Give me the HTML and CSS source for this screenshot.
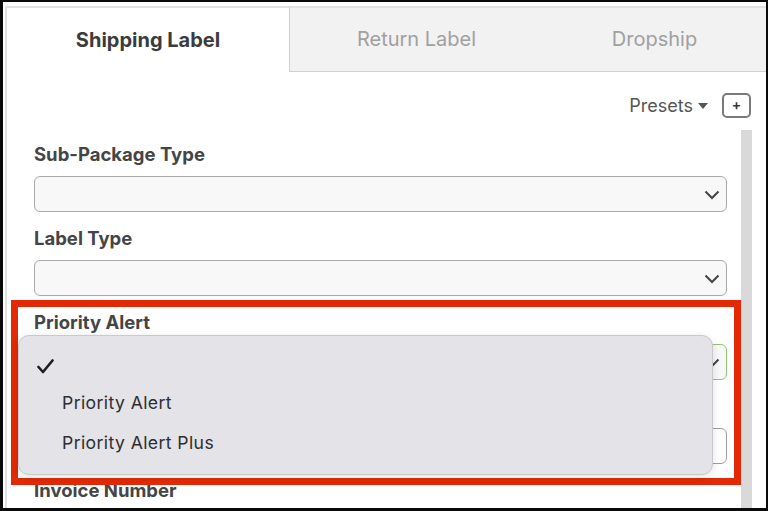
FILE: index.html
```html
<!DOCTYPE html>
<html lang="en">
<head>
<meta charset="utf-8">
<title>Shipping Label</title>
<link rel="stylesheet" href="styles.css">
</head>
<body>
<div class="frame">
  <div class="panel">
    <div class="tabs">
      <div class="tab active">Shipping Label</div>
      <div class="tab">Return Label</div>
      <div class="tab">Dropship</div>
    </div>
    <div class="body">
      <div class="presets-row">
        <span class="presets">Presets<span class="caret"></span></span>
        <span class="add">+</span>
      </div>
      <div class="scroll">
        <div class="fields">
          <div class="field">
            <div class="label">Sub-Package Type</div>
            <div class="select"><svg class="chev" width="16" height="10" viewBox="0 0 16 10"><path d="M1.5 1.5 L8 8 L14.5 1.5" fill="none" stroke="#444" stroke-width="2"/></svg></div>
          </div>
          <div class="field">
            <div class="label">Label Type</div>
            <div class="select"><svg class="chev" width="16" height="10" viewBox="0 0 16 10"><path d="M1.5 1.5 L8 8 L14.5 1.5" fill="none" stroke="#444" stroke-width="2"/></svg></div>
          </div>
          <div class="field">
            <div class="label">Priority Alert</div>
            <div class="select focused"><svg class="chev" width="16" height="10" viewBox="0 0 16 10"><path d="M1.5 1.5 L8 8 L14.5 1.5" fill="none" stroke="#444" stroke-width="2"/></svg></div>
          </div>
          <div class="field">
            <div class="label"></div>
            <div class="input"></div>
          </div>
          <div class="field">
            <div class="label">Invoice Number</div>
            <div class="input"></div>
          </div>
        </div>
        <div class="scrollbar"></div>
      </div>
    </div>
  </div>
  <div class="highlight"></div>
  <div class="popup">
    <div class="item checked"><svg class="check" width="17" height="15" viewBox="0 0 17 15"><path d="M1.5 8 L6 13 L15.5 1.5" fill="none" stroke="#1e1e1e" stroke-width="2.6" stroke-linecap="round" stroke-linejoin="round"/></svg></div>
    <div class="item">Priority Alert</div>
    <div class="item">Priority Alert Plus</div>
  </div>
</div>
</body>
</html>
```
FILE: styles.css
```css
* { box-sizing: border-box; }
html, body { margin: 0; padding: 0; }
body { background: #000; font-family: Inter, "Liberation Sans", Arial, sans-serif; }

.frame {
  position: relative;
  width: 768px;
  height: 511px;
  background: #fff;
  border-style: solid;
  border-color: #0a0a0a;
  border-width: 2px 2px 3px 3px;
  padding: 4px 0 0 2px;
  overflow: hidden;
}

.panel {
  height: 100%;
  border-left: 2px solid #e2e2e2;
  display: flex;
  flex-direction: column;
}

.tabs {
  display: grid;
  grid-template-columns: 283px 253px 1fr;
  height: 66px;
  flex: none;
}
.tab {
  display: flex;
  align-items: center;
  justify-content: center;
  font-size: 20px;
  color: #a0a0a0;
  background: #f2f2f2;
  border-top: 2px solid #e2e2e2;
  border-bottom: 1px solid #cfcfcf;
  padding-bottom: 1px;
}
.tab.active {
  background: #fff;
  color: #3c3c3c;
  font-weight: 700;
  border-bottom: none;
  border-right: 1px solid #cfcfcf;
  padding-bottom: 0;
}

.body {
  flex: 1;
  display: flex;
  flex-direction: column;
  min-height: 0;
}

.presets-row {
  display: flex;
  justify-content: flex-end;
  align-items: center;
  gap: 14px;
  padding: 20px 15px 0 0;
  height: 46px;
  flex: none;
}
.presets {
  font-size: 18px;
  color: #555;
  display: flex;
  align-items: center;
}
.caret {
  display: inline-block;
  margin-left: 5px;
  width: 0;
  height: 0;
  border-left: 5.5px solid transparent;
  border-right: 5.5px solid transparent;
  border-top: 6px solid #555;
  margin-top: 2px;
}
.add {
  width: 29px;
  height: 25px;
  border: 2px solid #7a7a7a;
  border-radius: 5px;
  display: flex;
  align-items: center;
  justify-content: center;
  font-size: 14px;
  font-weight: 600;
  color: #333;
  line-height: 1;
}

.scroll {
  flex: 1;
  display: flex;
  margin-top: 12px;
  min-height: 0;
}
.fields {
  flex: 1;
  padding: 14px 14px 0 27px;
  display: flex;
  flex-direction: column;
  gap: 16px;
}
.field {
  display: flex;
  flex-direction: column;
  gap: 12px;
}
.label {
  font-size: 18.5px;
  font-weight: 700;
  color: #454545;
  line-height: 20px;
  height: 20px;
}
.select, .input {
  height: 36px;
  border: 1px solid #a9a9a9;
  border-radius: 6px;
  background: #f8f8f8;
  display: flex;
  align-items: center;
  justify-content: flex-end;
  padding-right: 6px;
}
.input { background: #fff; border-color: #9d9d9d; }
.select.focused { border-color: #8cc66e; }
.chev { margin-top: 1px; }

.scrollbar {
  width: 11px;
  background: #d9d9d9;
  margin-right: 14px;
}

.highlight {
  position: absolute;
  left: 8px;
  top: 298px;
  width: 730px;
  height: 185px;
  border: 7px solid #e22a06;
}

.popup {
  position: absolute;
  left: 15px;
  top: 333px;
  width: 695px;
  height: 140px;
  background: #e3e3e8;
  border: 1px solid #c9c9cd;
  border-radius: 11px;
  box-shadow: 0 2px 8px rgba(0,0,0,0.12);
  padding-top: 7px;
}
.item {
  height: 40px;
  line-height: 40px;
  padding-left: 43px;
  font-size: 17.6px;
  color: #2e2e2e;
  letter-spacing: 0.4px;
}
.item.checked {
  position: relative;
}
.check {
  position: absolute;
  left: 18px;
  top: 16px;
}
```
